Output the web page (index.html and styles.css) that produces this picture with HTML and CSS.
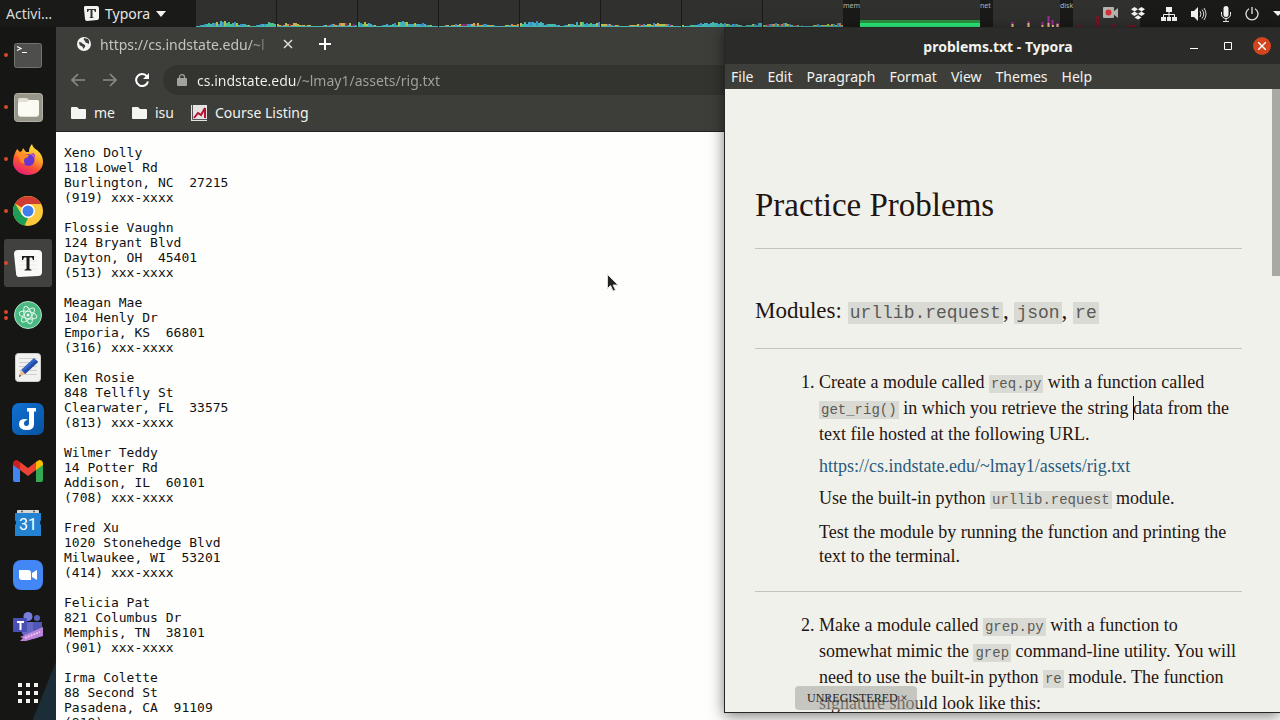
FILE: index.html
```html
<!DOCTYPE html>
<html lang="en">

<head>
    <meta charset="UTF-8">
    <title>Desktop</title>
    <link rel="stylesheet" href="styles.css">
</head>

<body>
    <header class="topbar">
        <button class="activities">Activi…</button>
        <button class="app-menu">
            <svg width="15" height="15" viewBox="0 0 15 15"><path d="M2 0h11a2 2 0 0 1 2 2v10a2 2 0 0 1-2 2l-10 1a2 2 0 0 1-2-2L0 3a2 2 0 0 1 2-3z" fill="#f4f4f0"/><path d="M3 3h9v3h-1l-1-2H8.500v7l1 .5v.5h-4v-.5l1-.5V4H5L4 6H3z" fill="#333"/></svg>
            Typora
            <svg width="10" height="6" viewBox="0 0 10 6"><path d="M0 0h10L5 6z" fill="#f2f2ee"/></svg>
        </button>
        <div class="monitors">
            <div class="cpus" id="cpus"></div>
            <span class="monitor-label mem-label">mem</span>
            <div class="mem"></div>
            <span class="monitor-label">net</span>
            <svg class="graph" width="67" height="27" viewBox="0 0 67 27">
                <path d="M19.500 27v-5M35.500 27v-6M49.500 27v-5M55.500 27V16M59.500 27v-7M64.500 27v-4" stroke="#a32a9c" stroke-width="2"/>
                <path d="M19.500 27v-3M35.500 27v-4M49.500 27v-2M55.500 27v-4M60 27v-2M64.500 27v-3" stroke="#f3c188" stroke-width="2"/>
            </svg>
            <span class="monitor-label">disk</span>
            <div class="disk">
                <svg class="disk-graph" width="67" height="27" viewBox="0 0 67 27"><path d="M4 27v-2h5v2zM23 27V16h3v11zM38 27v-3h5v3zM54 27v-2h8v2z" fill="#6d1726"/></svg>
                <svg class="record" width="15" height="12" viewBox="0 0 15 12"><rect width="11" height="11" rx="1" fill="#b3b3ad"/><path d="M10 5l5-4v10l-5-4z" fill="#b3b3ad"/><circle cx="5.500" cy="5.500" r="3" fill="#d62f36"/></svg>
            </div>
        </div>
        <div class="tray">
            <svg class="dropbox" width="14" height="13" viewBox="0 0 14 13"><path d="M3.500 0L7 2.200 3.500 4.400 0 2.200zM10.500 0L14 2.200l-3.500 2.200L7 2.200zM3.500 4.600L7 6.800 3.500 9 0 6.800zM10.500 4.600L14 6.800 10.500 9 7 6.800zM7 8.200l3.500 2.200L7 12.600l-3.500-2.200z" fill="#f2f2ee"/></svg>
            <svg width="16" height="14" viewBox="0 0 16 14"><path d="M5 0h6v5H5zM0 10h5v4H0zM6 10h4v4H6zM11 10h5v4h-5z" fill="#f2f2ee"/><path d="M8 4v7M2.500 11V7.500h11V11" fill="none" stroke="#f2f2ee"/></svg>
            <svg width="16" height="14" viewBox="0 0 16 14"><path d="M0 4h3l4-4v14l-4-4H0z" fill="#f2f2ee"/><path d="M9 4q2 3 0 6M11 2.500q3.500 4.500 0 9M13 1q4 6 0 12" fill="none" stroke="#d8d8d4"/></svg>
            <svg width="10" height="16" viewBox="0 0 10 16"><rect x="2.500" width="5" height="11" rx="2.500" fill="#f2f2ee"/><path d="M.5 6v2.500a4.500 4 0 0 0 9 0V6M5 12v3M2 15.500h6" fill="none" stroke="#f2f2ee"/></svg>
            <svg width="14" height="14" viewBox="0 0 14 14"><path d="M4 1.700a6 6 0 1 0 6 0M7 0v7" fill="none" stroke="#e4e4e0" stroke-width="1.300"/></svg>
            <svg width="10" height="5" viewBox="0 0 10 5"><path d="M0 0h10L5 5z" fill="#f2f2ee"/></svg>
        </div>
    </header>

    <div class="desktop">
        <nav class="dock">
            <button class="dock-item running" aria-label="Terminal">
                <svg width="28" height="25" viewBox="0 0 28 25"><rect x=".5" y=".5" width="27" height="24" rx="2" fill="#4e4e4c" stroke="#73736f"/><path d="M3 3.500l4 2-4 2M8 9.500h5" fill="none" stroke="#fff" stroke-width="1.200"/></svg>
            </button>
            <button class="dock-item running" aria-label="Files">
                <svg width="29" height="29" viewBox="0 0 29 29"><rect x=".5" y=".5" width="28" height="28" rx="3" fill="#98968a" stroke="#b4b2a6"/><path d="M6 5h6q2 0 3 2h8q2 0 2 2v12q0 3-3 3H7q-3 0-3-3V7q0-2 2-2z" fill="#e1dfd2"/><path d="M7 9h5q2 0 3-2h8q2 0 2 2v11q0 3-3 3H7q-3 0-3-3v-9q0-2 3-2z" fill="#fbfaf3"/></svg>
            </button>
            <button class="dock-item running" aria-label="Firefox">
                <svg width="30" height="31" viewBox="0 0 30 31">
                    <defs>
                        <linearGradient id="fox" x1=".8" y1="0" x2=".3" y2="1"><stop offset="0" stop-color="#fff04a"/><stop offset=".35" stop-color="#ffb02a"/><stop offset=".65" stop-color="#fb5432"/><stop offset="1" stop-color="#e51a7c"/></linearGradient>
                    </defs>
                    <path d="M2 9l2-4 3 3 2-1 1-3 3 4 3 0q0-5 3-8 1 4 5 6 6 5 6 12a15 13 0 0 1-30 0q0-5 2-9z" fill="url(#fox)"/>
                    <circle cx="15.500" cy="16" r="6" fill="#6a35d0"/>
                    <path d="M3 10q4-3 8 0l5 1q-1 3-4 3-2 3 0 6-6-1-6-7z" fill="#ff8b25"/>
                    <path d="M17 10q5 1 5 6 1-4-1-7z" fill="#b33ae0"/>
                </svg>
            </button>
            <button class="dock-item running" aria-label="Chrome">
                <svg width="30" height="30" viewBox="0 0 30 30">
                    <circle cx="15" cy="15" r="15" fill="#fbc93b"/>
                    <path d="M15 15L2 7.500A15 15 0 0 1 28 8H15z" fill="#d03b32"/>
                    <path d="M2 7.500l6.800 11.300L15 22l-3.500 7.600A15 15 0 0 1 2 7.500z" fill="#1e9d56"/>
                    <circle cx="15" cy="15" r="7" fill="#fff"/><circle cx="15" cy="15" r="5.500" fill="#3f80ea"/>
                </svg>
            </button>
            <button class="dock-item running active" aria-label="Typora">
                <svg width="28" height="28" viewBox="0 0 28 28"><path d="M4 1h20q4 0 4 4v18q0 4-4 4L5 28q-3 0-3-4L0 5q0-4 4-4z" fill="#fafaf8"/><path d="M5 8h18M5 12h18M5 16h18M5 20h18" stroke="#e9e9e7"/><path d="M8 7h12v4h-1l-1-2.500h-2.500v11.500l2 .7v.8h-7v-.8l2-.7V8.500H10L9 11H8z" fill="#1b1b1b"/></svg>
            </button>
            <button class="dock-item running twice" aria-label="Atom">
                <svg width="28" height="28" viewBox="0 0 28 28"><circle cx="14" cy="14" r="13.500" fill="#49b881" stroke="#b5e3c8"/><g fill="none" stroke="#e4f6eb"><ellipse cx="14" cy="14" rx="9" ry="3.500" transform="rotate(12 14 14)"/><ellipse cx="14" cy="14" rx="9" ry="3.500" transform="rotate(72 14 14)"/><ellipse cx="14" cy="14" rx="9" ry="3.500" transform="rotate(132 14 14)"/></g><circle cx="14" cy="14" r="1.500" fill="#fff"/></svg>
            </button>
            <button class="dock-item" aria-label="Text Editor">
                <svg width="26" height="29" viewBox="0 0 26 29"><rect x=".5" y=".5" width="25" height="28" rx="3" fill="#f1f1ef" stroke="#cfcfcb"/><path d="M4 5.500h18M4 9.500h18M4 13.500h18M4 17.500h18M4 21.500h18" stroke="#cfcfcd"/><path d="M19 5l4 4L10 21l-4-4z" fill="#3564ca"/><path d="M21 7l2 2L10 21l-2-2z" fill="#234da5"/><path d="M6 17l4 4-6 3z" fill="#efbd91"/><path d="M4.800 21.500L6 23l-2 1z" fill="#333"/></svg>
            </button>
            <button class="dock-item" aria-label="Joplin">
                <svg width="32" height="32" viewBox="0 0 32 32"><defs><linearGradient id="joplin" x2="1" y2="1"><stop stop-color="#1071d3"/><stop offset="1" stop-color="#0753a0"/></linearGradient></defs><rect width="32" height="32" rx="7" fill="url(#joplin)"/><path d="M15 5h9v3.500h-2V21q0 6-7 6-8 0-8-6 0-5 6-5 2 0 3 1-4 0-4 3.500 0 2.500 2.500 2.500t2.500-3V8.500h-2z" fill="#fff"/></svg>
            </button>
            <button class="dock-item" aria-label="Gmail">
                <svg width="30" height="22" viewBox="0 0 30 22"><path d="M0 4l7 5v13H2q-2 0-2-2z" fill="#4285f4"/><path d="M30 4l-7 5v13h5q2 0 2-2z" fill="#34a853"/><path d="M7 2l8 6 8-6v8l-8 6-8-6z" fill="#ea4335"/><path d="M0 4q0-4 4-4l3 2v8L0 5z" fill="#c5221f"/><path d="M30 4q0-4-4-4l-3 2v8l7-5z" fill="#fbbc04"/></svg>
            </button>
            <button class="dock-item" aria-label="Calendar">
                <svg width="26" height="26" viewBox="0 0 26 26"><rect x="2" width="22" height="5" rx="1" fill="#d7d6d1"/><circle cx="7" cy="1.500" r="1" fill="#555"/><circle cx="19" cy="1.500" r="1" fill="#555"/><path d="M0 3h26v7q-2 3 0 5v11H0V15q2-2 0-5z" fill="#2383d2"/><text x="13" y="20" text-anchor="middle" class="calendar-day">31</text></svg>
            </button>
            <button class="dock-item" aria-label="Zoom">
                <svg width="30" height="30" viewBox="0 0 30 30"><rect width="30" height="30" rx="8" fill="#4386f5"/><path d="M6 10h9q3 0 3 3v7H9q-3 0-3-3zM19 13l5-3v10l-5-3z" fill="#fff"/></svg>
            </button>
            <button class="dock-item" aria-label="Teams">
                <svg width="31" height="30" viewBox="0 0 31 30"><circle cx="15" cy="4.500" r="4.500" fill="#7a7fdb"/><circle cx="24" cy="6" r="3" fill="#5a62bd"/><path d="M8 10h20v9q0 7-9 8-9-1-11-8z" fill="#6469c8"/><path d="M20 10h9v11h-9z" fill="#5058b4"/><rect y="6" width="14" height="14" rx="1" fill="#494fb3"/><path d="M4 9h7v2H8.500v7h-2v-7H4z" fill="#fff"/><path d="M7 25l23-10v9l-17 5H7l3-3z" fill="#bd83db"/><path d="M12 26l15-6" stroke="#e2c4f0" stroke-width="2" stroke-dasharray="2 1"/></svg>
            </button>
            <button class="dock-item show-apps" aria-label="Show Applications">
                <svg width="20" height="20" viewBox="0 0 20 20"><path d="M0 0h4v4H0zM8 0h4v4H8zM16 0h4v4h-4zM0 8h4v4H0zM8 8h4v4H8zM16 8h4v4h-4zM0 16h4v4H0zM8 16h4v4H8zM16 16h4v4h-4z" fill="#f4f4f0"/></svg>
            </button>
        </nav>

        <main class="browser">
            <div class="tabs">
                <svg width="14" height="14" viewBox="0 0 14 14"><circle cx="7" cy="7" r="7" fill="#f2f2f0"/><path d="M2 5q3 0 4 2 3 1 2 3l-2 2q0-3-2-3-2-1-2-4zM7 1q-1 2 1 3 0 2 2 2l2 1q1-3-1-5z" fill="#3c3c39"/></svg>
                <span class="tab-title">https://cs.indstate.edu/~l</span>
                <button class="tab-button" aria-label="Close tab"><svg width="10" height="10" viewBox="0 0 10 10"><path d="M1 1l8 8M9 1L1 9" stroke="#dededb" stroke-width="1.500"/></svg></button>
                <button class="tab-button new-tab" aria-label="New tab"><svg width="12" height="12" viewBox="0 0 12 12"><path d="M6 0v12M0 6h12" stroke="#fff" stroke-width="2"/></svg></button>
            </div>
            <div class="toolbar">
                <button aria-label="Back"><svg width="14" height="14" viewBox="0 0 14 14"><path d="M14 7H1M7 1L1 7l6 6" fill="none" stroke="#8b8b86" stroke-width="1.600"/></svg></button>
                <button aria-label="Forward"><svg width="14" height="14" viewBox="0 0 14 14"><path d="M0 7h13M7 1l6 6-6 6" fill="none" stroke="#8b8b86" stroke-width="1.600"/></svg></button>
                <button aria-label="Reload"><svg width="14" height="14" viewBox="0 0 14 14"><path d="M12 3.500A6 6 0 1 0 13 8.500" fill="none" stroke="#fff" stroke-width="2"/><path d="M14 0v6H8z" fill="#fff"/></svg></button>
                <label class="omnibox">
                    <svg width="10" height="12" viewBox="0 0 10 12"><rect y="4" width="10" height="8" rx="1" fill="#a2a29e"/><path d="M2.500 5V3a2.500 2.300 0 0 1 5 0v2" fill="none" stroke="#a2a29e" stroke-width="1.300"/></svg>
                    <input type="text" aria-label="Address" value="cs.indstate.edu/~lmay1/assets/rig.txt">
                </label>
            </div>
            <div class="bookmarks">
                <a href="#me"><svg width="15" height="12" viewBox="0 0 15 12"><path d="M1 0h5l2 2h6q1 0 1 1v8q0 1-1 1H1q-1 0-1-1V1q0-1 1-1z" fill="#f4f4f0"/></svg>me</a>
                <a href="#isu"><svg width="15" height="12" viewBox="0 0 15 12"><path d="M1 0h5l2 2h6q1 0 1 1v8q0 1-1 1H1q-1 0-1-1V1q0-1 1-1z" fill="#f4f4f0"/></svg>isu</a>
                <a href="#courses"><svg width="16" height="16" viewBox="0 0 16 16"><path d="M0 0h16v16H0z" fill="#e5e2e2"/><path d="M1.500 0v14.500H16" fill="none" stroke="#555"/><path d="M3 13l4-5 3 2 4-7M14 3v10" fill="none" stroke="#b90f31" stroke-width="2"/></svg>Course Listing</a>
            </div>
            <pre class="text-file">Xeno Dolly
118 Lowel Rd
Burlington, NC  27215
(919) xxx-xxxx

Flossie Vaughn
124 Bryant Blvd
Dayton, OH  45401
(513) xxx-xxxx

Meagan Mae
104 Henly Dr
Emporia, KS  66801
(316) xxx-xxxx

Ken Rosie
848 Tellfly St
Clearwater, FL  33575
(813) xxx-xxxx

Wilmer Teddy
14 Potter Rd
Addison, IL  60101
(708) xxx-xxxx

Fred Xu
1020 Stonehedge Blvd
Milwaukee, WI  53201
(414) xxx-xxxx

Felicia Pat
821 Columbus Dr
Memphis, TN  38101
(901) xxx-xxxx

Irma Colette
88 Second St
Pasadena, CA  91109
(818) xxx-xxxx</pre>
        </main>

        <section class="typora">
            <div class="titlebar">
                <span class="window-title">problems.txt - Typora</span>
                <div class="window-buttons">
                    <button aria-label="Minimize"><svg width="8" height="8" viewBox="0 0 8 8"><path d="M0 6.500h8" stroke="#fff"/></svg></button>
                    <button aria-label="Maximize"><svg width="8" height="8" viewBox="0 0 8 8"><path d="M.5.500h7v7h-7z" fill="none" stroke="#fff"/></svg></button>
                    <button class="close" aria-label="Close"><svg width="8" height="8" viewBox="0 0 8 8"><path d="M0 0l8 8M8 0L0 8" stroke="#fff" stroke-width="1.400"/></svg></button>
                </div>
            </div>
            <div class="menubar">
                <button>File</button>
                <button>Edit</button>
                <button>Paragraph</button>
                <button>Format</button>
                <button>View</button>
                <button>Themes</button>
                <button>Help</button>
            </div>
            <div class="editor">
                <article class="document">
                    <h1>Practice Problems</h1>
                    <h2>Modules: <code>urllib.request</code>, <code>json</code>, <code>re</code></h2>
                    <ol>
                        <li>
                            <p>Create a module called <code>req.py</code> with a function called <code>get_rig()</code> in which you retrieve the string <span class="caret"></span>data from the text file hosted at the following URL.</p>
                            <p><a href="https://cs.indstate.edu/~lmay1/assets/rig.txt">https://cs.indstate.edu/~lmay1/assets/rig.txt</a></p>
                            <p>Use the built-in python <code>urllib.request</code> module.</p>
                            <p>Test the module by running the function and printing the text to the terminal.</p>
                        </li>
                    </ol>
                    <hr>
                    <ol start="2">
                        <li>
                            <p>Make a module called <code>grep.py</code> with a function to somewhat mimic the <code>grep</code> command-line utility. You will need to use the built-in python <code>re</code> module. The function signature should look like this:</p>
                        </li>
                    </ol>
                </article>
                <div class="scrollbar"><div class="thumb"></div></div>
                <button class="unregistered">UNREGISTERED ×</button>
            </div>
        </section>

        <svg class="pointer" width="12" height="18" viewBox="0 0 12 18"><path d="M.5.500v14l3-3 2.500 5.500 2.500-1L6 11h5z" fill="#222" stroke="#ddd"/></svg>
    </div>
    <script src="script.js"></script>
</body>

</html>
```

FILE: styles.css
```css
* {
    box-sizing: border-box;
}

body {
    margin: 0;
    height: 100vh;
    display: flex;
    flex-direction: column;
    overflow: hidden;
    background-color: #161714;
    font-family: "Noto Sans", sans-serif;
    font-size: 14px;
    color: #f2f2ee;
}

button {
    display: flex;
    align-items: center;
    padding: 0;
    border: none;
    background: none;
    color: inherit;
    font: inherit;
    cursor: pointer;
}

svg {
    flex: none;
}

/* top bar */
.topbar {
    display: flex;
    height: 27px;
    flex: none;
    background-color: #1a1b18;
    overflow: hidden;
}

.activities {
    width: 84px;
    padding-left: 6px;
    color: #dcdcd8;
}

.app-menu {
    width: 112px;
    gap: 6px;
    color: #e6e6e2;
}

.monitors {
    display: flex;
    flex: 1;
}

.cpus {
    display: flex;
    flex: 1;
    gap: 1px;
}

.cpu {
    flex: 1;
    min-width: 0;
    height: 27px;
    background-color: #30312e;
}

.monitor-label {
    flex: none;
    width: 13px;
    font-size: 7px;
    line-height: 12px;
    color: #b5b5b0;
}

.mem-label {
    width: 17px;
}

.mem {
    width: 120px;
    background: linear-gradient(#30312e 20px, #2b9540 20px, #2b9540 23px, #2df27c 23px);
}

.graph,
.disk-graph {
    background-color: #30312e;
}

.disk {
    position: relative;
}

.record {
    position: absolute;
    left: 30px;
    top: 7px;
}

.tray {
    display: flex;
    align-items: center;
    gap: 14px;
    margin-left: -9px;
    margin-right: -3px;
    position: relative;
}

.dropbox {
    margin-right: 2px;
}

/* dock and windows */
.desktop {
    display: flex;
    flex: 1;
    min-height: 0;
    position: relative;
}

.dock {
    display: flex;
    flex-direction: column;
    gap: 4px;
    width: 56px;
    flex: none;
    padding: 4px 4px 3px;
    background: linear-gradient(to bottom right, transparent 50%, #1b2d37 53%) right bottom / 24px 60px no-repeat, #161714;
}

.dock-item {
    justify-content: center;
    height: 48px;
    flex: none;
    border-radius: 3px;
    position: relative;
}

.dock-item.active {
    background-color: #41423f;
}

.dock-item.running::before {
    content: "";
    position: absolute;
    left: 0;
    top: 22px;
    width: 4px;
    height: 4px;
    border-radius: 50%;
    background-color: #d5492b;
}

.dock-item.twice::before {
    top: 19px;
    box-shadow: 0 6px #d5492b;
}

.show-apps {
    margin-top: auto;
}

.calendar-day {
    font: 16px Roboto, sans-serif;
    fill: #fff;
}

.browser {
    display: flex;
    flex-direction: column;
    flex: 1;
    min-width: 0;
    background-color: #3d3e3a;
}

.tabs {
    display: flex;
    align-items: center;
    height: 34px;
    flex: none;
    padding-left: 21px;
}

.tab-title {
    width: 175px;
    margin: 0 8px 0 9px;
    white-space: nowrap;
    color: #c4c4bf;
    -webkit-mask-image: linear-gradient(to right, #000 85%, transparent);
    mask-image: linear-gradient(to right, #000 85%, transparent);
}

.new-tab {
    margin-left: 26px;
}

.toolbar {
    display: flex;
    align-items: center;
    gap: 18px;
    height: 38px;
    flex: none;
    padding-left: 15px;
}

.omnibox {
    display: flex;
    align-items: center;
    flex: 1;
    height: 30px;
    margin-left: -4px;
    padding-left: 14px;
    gap: 10px;
    border-radius: 15px 0 0 15px;
    background-color: #333430;
}

/* the host name is brighter than the rest of the address */
.omnibox input {
    flex: 1;
    padding: 0;
    border: none;
    outline: none;
    font: inherit;
    color: transparent;
    background: linear-gradient(to right, #f4f4f0 99px, #a3a39e 99px);
    -webkit-background-clip: text;
    background-clip: text;
}

.bookmarks {
    display: flex;
    align-items: center;
    gap: 17px;
    height: 33px;
    flex: none;
    padding: 0 0 5px 15px;
    border-bottom: 1px solid #222320;
}

.bookmarks a {
    display: flex;
    align-items: center;
    gap: 8px;
    color: #f2f2ee;
    text-decoration: none;
}

.text-file {
    flex: 1;
    min-height: 0;
    margin: 0;
    padding: 13px 8px 0;
    overflow: hidden;
    background-color: #fefefc;
    color: #111;
    font: 13px/15px "DejaVu Sans Mono", monospace;
}

.typora {
    display: flex;
    flex-direction: column;
    position: absolute;
    top: 0;
    right: 0;
    bottom: 7px;
    width: 556px;
    border: 1px solid #262724;
    border-right: none;
    box-shadow: 0 3px 14px rgba(0, 0, 0, 0.5);
}

.titlebar {
    display: grid;
    grid-template-columns: 1fr auto 1fr;
    align-items: center;
    height: 36px;
    flex: none;
    padding-right: 9px;
    background-color: #2b2c29;
}

.window-title {
    grid-column: 2;
    font-weight: bold;
}

.window-buttons {
    display: flex;
    align-items: center;
    justify-content: flex-end;
    gap: 26px;
}

.window-buttons .close {
    justify-content: center;
    width: 18px;
    height: 18px;
    margin-left: -5px;
    border-radius: 50%;
    background-color: #d2451e;
}

.menubar {
    display: flex;
    gap: 14px;
    height: 25px;
    flex: none;
    padding-left: 6px;
    background-color: #3d3e3a;
}

.editor {
    display: flex;
    flex: 1;
    min-height: 0;
    overflow: hidden;
    position: relative;
    background-color: #f1f1eb;
}

.document {
    flex: 1;
    padding: 92px 30px 0;
    color: #1f1512;
    font: 18px/24px "Liberation Serif", serif;
}

.document h1,
.document h2 {
    margin: 0;
    padding-bottom: 19px;
    border-bottom: 1px solid #c3c5bd;
    font-weight: normal;
}

.document h1 {
    font-size: 33px;
    line-height: 48px;
}

.document h2 {
    margin-top: 44px;
    font-size: 23px;
    line-height: 36px;
}

.document ol {
    margin: 21px 0 23px;
    padding-left: 64px;
}

.document p {
    margin: 0 0 8px;
}

.document code {
    padding: 1px 2px;
    background-color: #dadad5;
    color: #5a5a56;
    font-family: "Liberation Mono", monospace;
    font-size: 14px;
}

.document h2 code {
    font-size: 18px;
    line-height: 30px;
}

.document a {
    color: #2a5a7d;
    text-decoration: none;
}

.document hr {
    margin: 0;
    border: none;
    border-top: 1px solid #c3c5bd;
}

.caret {
    margin-right: -1px;
    padding: 2px 0;
    border-left: 1px solid #000;
}

.scrollbar {
    width: 8px;
}

.thumb {
    height: 30%;
    background-color: #a8a9a2;
}

.unregistered {
    position: absolute;
    left: 70px;
    bottom: 2px;
    height: 24px;
    padding: 0 10px 0 12px;
    border-radius: 4px;
    background-color: rgba(170, 170, 164, 0.6);
    color: #222;
    font: 12px "Liberation Serif", serif;
}

.pointer {
    position: absolute;
    left: 607px;
    top: 247px;
}
```

FILE: script.js
```js
const cpus = document.getElementById('cpus');
const busy = ['#3fa9c9', '#46c08f', '#3b8fd0', '#45b7b0', '#a9c64b'];
const idle = ['#d8854a', '#a9c64b', '#8a2f6a', '#3b8fd0', '#c9b04f'];
let seed = 7;

function next() {
    seed = (seed * 16807) % 2147483647;
    return seed / 2147483647;
}

for (let i = 0; i < 8; i++) {
    const colors = i % 2 ? idle : busy;
    const peak = i % 2 ? 3 : 5;
    let bars = '';
    for (let x = 0; x < 80; x += 2) {
        const load = Math.abs(Math.sin(x / 18 + i));
        const height = Math.round(load * peak * (0.3 + next() * 0.7));
        const color = colors[Math.floor(next() * colors.length)];
        bars += `<rect x="${x}" y="${26 - height}" width="2" height="${height}" fill="${color}"/>`;
    }
    bars += '<rect y="26" width="80" height="1" fill="#45b7b0"/>';
    cpus.innerHTML += `<svg class="cpu" viewBox="0 0 80 27" preserveAspectRatio="none">${bars}</svg>`;
}
```
